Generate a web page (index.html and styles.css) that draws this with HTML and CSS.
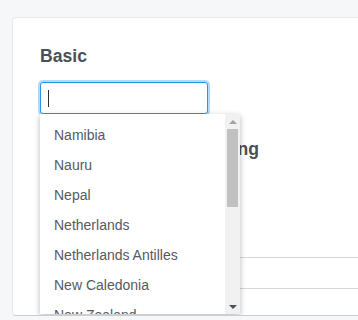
FILE: index.html
```html
<!DOCTYPE html>
<html lang="en">
<head>
    <meta charset="UTF-8">
    <meta name="viewport" content="width=device-width, initial-scale=1.0">
    <title>Select demo</title>
    <link rel="stylesheet" href="styles.css">
</head>
<body>

<div class="card">
    <section class="demo">
        <h3 class="demo-title">Basic</h3>
        <div class="select">
            <div class="select-input"><span class="caret"></span></div>
            <div class="dropdown">
                <ul class="options">
                    <li>Namibia</li>
                    <li>Nauru</li>
                    <li>Nepal</li>
                    <li>Netherlands</li>
                    <li>Netherlands Antilles</li>
                    <li>New Caledonia</li>
                    <li>New Zealand</li>
                </ul>
                <div class="scrollbar">
                    <span class="arrow up"></span>
                    <span class="track"><span class="thumb"></span></span>
                    <span class="arrow down"></span>
                </div>
            </div>
        </div>
    </section>

    <section class="demo">
        <h3 class="demo-title">Custom Option Rendering</h3>
        <div class="rows">
            <div class="row"></div>
            <div class="row"></div>
        </div>
    </section>
</div>

</body>
</html>
```

FILE: styles.css
```css
body {
    margin: 0;
    background-color: #f6f7f9;
    font-family: "Liberation Sans", Arial, sans-serif;
}
.card {
    margin: 17px 0 0 12px;
    height: 299px;
    background-color: #fff;
    border: 1px solid #e6e8eb;
    border-right: none;
    border-bottom-color: #c9ccd1;
    border-radius: 4px 0 0 4px;
    padding: 28px 0 0 27px;
    box-sizing: border-box;
    overflow: hidden;
}
.demo-title {
    margin: 0;
    font-size: 17.6px;
    line-height: 20px;
    font-weight: bold;
    color: #4a4f57;
}
.select {
    position: relative;
    width: 168px;
    margin-top: 16px;
}
.select-input {
    height: 32px;
    border: 1px solid #2196f3;
    border-radius: 3px;
    box-shadow: 0 0 0 2px #b3dafb;
    box-sizing: border-box;
    background: #fff;
    padding: 7px 0 0 7px;
}
.caret {
    display: block;
    width: 1px;
    height: 17px;
    background: #333;
}
.dropdown {
    position: absolute;
    top: 32px;
    left: 0;
    width: 200px;
    height: 200px;
    background: #fff;
    box-shadow: 0 2px 6px rgba(0, 0, 0, 0.28);
    display: flex;
    overflow: hidden;
    z-index: 2;
}
.options {
    flex: 1;
    list-style: none;
    margin: 0;
    padding: 6px 0 0 0;
}
.options li {
    height: 30px;
    line-height: 30px;
    padding-left: 14px;
    font-size: 14px;
    color: #555a63;
    white-space: nowrap;
}
.scrollbar {
    width: 15px;
    background: #f1f1f1;
    display: flex;
    flex-direction: column;
}
.arrow {
    height: 15px;
    display: flex;
    align-items: center;
    justify-content: center;
}
.arrow::before {
    content: "";
    border-left: 4px solid transparent;
    border-right: 4px solid transparent;
}
.arrow.up::before {
    border-bottom: 4px solid #a3a3a3;
}
.arrow.down::before {
    border-top: 4px solid #505050;
}
.track {
    flex: 1;
    padding: 0 2px;
}
.thumb {
    display: block;
    height: 78px;
    background: #c1c1c1;
}
.demo + .demo {
    margin-top: 25px;
}
.rows {
    margin-top: 98px;
}
.row {
    height: 30px;
    border-top: 1px solid #d5d8de;
}
```
